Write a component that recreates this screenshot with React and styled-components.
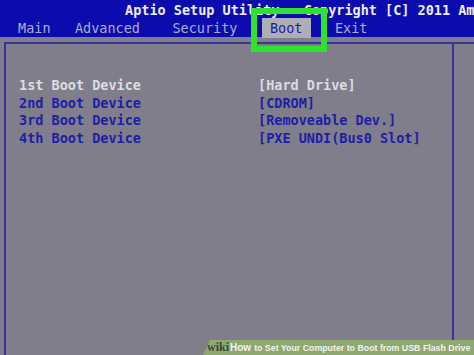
import React from 'react'
import styled, { createGlobalStyle } from 'styled-components'

const GlobalStyle = createGlobalStyle`
  html, body {
    margin: 0;
    padding: 0;
    background: #807e8a;
  }
  #root {
    width: 474px;
    height: 355px;
    overflow: hidden;
  }
`

const Screen = styled.div`
  position: relative;
  width: 474px;
  height: 355px;
  display: flex;
  flex-direction: column;
  background: #807e8a;
  font-family: "DejaVu Sans Mono", "Liberation Mono", monospace;
  font-size: 13.5px;
  font-weight: bold;
  overflow: hidden;
`

const Header = styled.div`
  background: #0c0cae;
  height: 37px;
  display: flex;
  flex-direction: column;
`

const Title = styled.div`
  height: 18px;
  line-height: 20px;
  padding-left: 125px;
  color: #ececf4;
  white-space: pre;
  overflow: hidden;
`

const TabBar = styled.div`
  display: grid;
  grid-template-columns: 7ch 12ch 12ch 8ch auto;
  padding-left: 18px;
  height: 19px;
  align-items: stretch;
`

const Tab = styled.div`
  display: flex;
  align-items: center;
  span {
    margin-left: -1ch;
    padding: 0 1ch;
    height: 100%;
    line-height: 20px;
    font-weight: normal;
    color: ${p => (p.$active ? '#1c1ca6' : '#aeaecb')};
    background: ${p => (p.$active ? '#aeaeb8' : 'transparent')};
  }
`

const Highlight = styled.div`
  position: absolute;
  left: 251px;
  top: 8px;
  width: 76px;
  height: 44px;
  box-sizing: border-box;
  border: 6px solid #2fe22f;
`

const Body = styled.div`
  flex: 1;
  display: flex;
  padding: 5px 0 0 4px;
`

const MainPanel = styled.div`
  width: 450px;
  box-sizing: border-box;
  border: 2px solid #34349c;
  border-bottom: none;
  padding: 33px 0 0 13px;
`

const HelpPanel = styled.div`
  flex: 1;
  border-top: 2px solid #34349c;
`

const Rows = styled.div`
  display: grid;
  grid-template-columns: 239px 1fr;
  grid-auto-rows: 17.5px;
  line-height: 17.5px;
`

const Cell = styled.div`
  color: ${p => (p.$selected ? '#dcdce4' : '#1d1da8')};
  white-space: pre;
`

const Banner = styled.div`
  position: absolute;
  right: 0;
  bottom: 0;
  width: 271px;
  height: 15px;
  background: #8ea872;
  clip-path: polygon(7px 0, 100% 0, 100% 100%, 0 100%);
  display: flex;
  align-items: center;
  padding-left: 4px;
  box-sizing: border-box;
  font-family: "Liberation Sans", Arial, sans-serif;
  font-size: 8.8px;
  font-weight: bold;
  color: #f2f5ea;
  white-space: nowrap;
`

const Wiki = styled.span`
  font-family: "Liberation Serif", serif;
  color: #3b4a31;
  font-size: 12px;
  margin-right: 1px;
`

const How = styled.span`
  font-size: 10px;
  margin-right: 3px;
`

const tabs = ['Main', 'Advanced', 'Security', 'Boot', 'Exit']

const devices = [
  ['1st Boot Device', '[Hard Drive]'],
  ['2nd Boot Device', '[CDROM]'],
  ['3rd Boot Device', '[Removeable Dev.]'],
  ['4th Boot Device', '[PXE UNDI(Bus0 Slot]'],
]

export default function App() {
  return (
    <Screen>
      <GlobalStyle />
      <Header>
        <Title>Aptio Setup Utility - Copyright [C] 2011 Am</Title>
        <TabBar>
          {tabs.map(t => (
            <Tab key={t} $active={t === 'Boot'}>
              <span>{t}</span>
            </Tab>
          ))}
        </TabBar>
      </Header>
      <Body>
        <MainPanel>
          <Rows>
            {devices.map(([label, value], i) => (
              <React.Fragment key={label}>
                <Cell $selected={i === 0}>{label}</Cell>
                <Cell $selected={i === 0}>{value}</Cell>
              </React.Fragment>
            ))}
          </Rows>
        </MainPanel>
        <HelpPanel />
      </Body>
      <Highlight />
      <Banner>
        <Wiki>wiki</Wiki>
        <How>How</How>
        to Set Your Computer to Boot from USB Flash Drive
      </Banner>
    </Screen>
  )
}
